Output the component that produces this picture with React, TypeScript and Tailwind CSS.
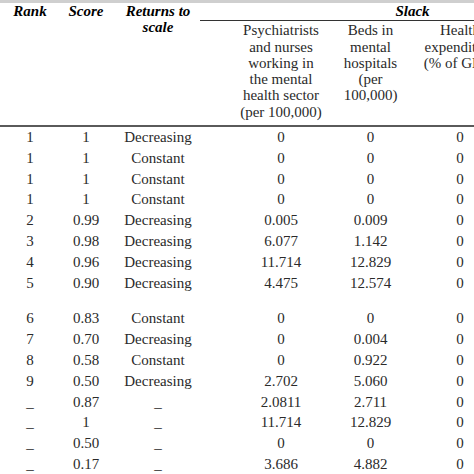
const cols = "grid grid-cols-[60px_52px_88px_126px_89px_90px_120px]";

type Row = [string, string, string, string, string, string];

const rowsA: Row[] = [
  ["1", "1", "Decreasing", "0", "0", "0"],
  ["1", "1", "Constant", "0", "0", "0"],
  ["1", "1", "Constant", "0", "0", "0"],
  ["1", "1", "Constant", "0", "0", "0"],
  ["2", "0.99", "Decreasing", "0.005", "0.009", "0"],
  ["3", "0.98", "Decreasing", "6.077", "1.142", "0"],
  ["4", "0.96", "Decreasing", "11.714", "12.829", "0"],
  ["5", "0.90", "Decreasing", "4.475", "12.574", "0"],
];

const rowsB: Row[] = [
  ["6", "0.83", "Constant", "0", "0", "0"],
  ["7", "0.70", "Decreasing", "0", "0.004", "0"],
  ["8", "0.58", "Constant", "0", "0.922", "0"],
  ["9", "0.50", "Decreasing", "2.702", "5.060", "0"],
  ["_", "0.87", "_", "2.0811", "2.711", "0"],
  ["_", "1", "_", "11.714", "12.829", "0"],
  ["_", "0.50", "_", "0", "0", "0"],
  ["_", "0.17", "_", "3.686", "4.882", "0"],
];

function DataRow({ r }: { r: Row }) {
  return (
    <div className={`${cols} h-[20.8px] items-center text-center leading-[20.8px]`}>
      <div>{r[0]}</div>
      <div>{r[1]}</div>
      <div className="pl-[4px]">{r[2]}</div>
      <div className="pl-[36px]">{r[3]}</div>
      <div>{r[4]}</div>
      <div>{r[5]}</div>
      <div />
    </div>
  );
}

export default function App() {
  return (
    <div
      className="w-[474px] h-[474px] overflow-hidden bg-white text-[15px] text-[#2a2a2a]"
      style={{ fontFamily: '"Liberation Serif", "Times New Roman", serif' }}
    >
      <div className="w-[625px]">
        <div className="h-[3px] bg-[#cfcfcf]" />
        {/* header */}
        <div className={`${cols} border-b-2 border-[#5a5a5a] pb-[5px] leading-[16.3px]`}>
          <div className="row-span-2 text-center font-bold italic text-black">Rank</div>
          <div className="row-span-2 text-center font-bold italic text-black">Score</div>
          <div className="row-span-2 pl-[4px] text-center font-bold italic text-black">
            Returns to
            <br />
            scale
          </div>
          <div className="col-span-4 border-b-[1.5px] border-[#333] pb-[1px] text-center font-bold italic text-black">
            Slack
          </div>
          <div className="pt-[1px] pl-[36px] text-center">
            Psychiatrists
            <br />
            and nurses
            <br />
            working in
            <br />
            the mental
            <br />
            health sector
            <br />
            (per 100,000)
          </div>
          <div className="pt-[1px] text-center">
            Beds in
            <br />
            mental
            <br />
            hospitals
            <br />
            (per
            <br />
            100,000)
          </div>
          <div className="pt-[1px] text-center">
            Health
            <br />
            expenditure
            <br />
            (% of GDP)
          </div>
          <div />
        </div>
        {/* body */}
        <div>
          {rowsA.map((r, i) => (
            <DataRow key={`a${i}`} r={r} />
          ))}
          <div className="h-[15px]" />
          {rowsB.map((r, i) => (
            <DataRow key={`b${i}`} r={r} />
          ))}
        </div>
      </div>
    </div>
  );
}
